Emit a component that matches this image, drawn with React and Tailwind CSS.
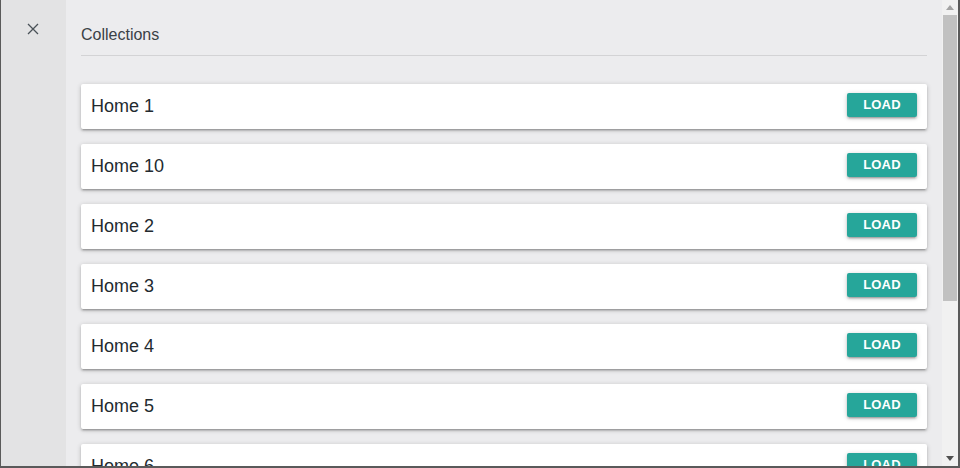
import React from "react";

const items = ["Home 1", "Home 10", "Home 2", "Home 3", "Home 4", "Home 5", "Home 6", "Home 7", "Home 8", "Home 9"];

export default function App() {
  return (
    <div className="flex h-[468px] w-[960px] overflow-hidden border-l border-r-2 border-b-2 border-[#5a5a5a] font-['Liberation_Sans',Arial,sans-serif]">
      <div className="w-[65px] shrink-0 bg-[#e3e3e4]">
        <div className="flex h-[58px] items-center justify-center">
          <svg width="12" height="12" viewBox="0 0 12 12" className="mt-[-1px] ml-[-1px]">
            <path d="M1 1 L11 11 M11 1 L1 11" stroke="#4a5258" strokeWidth="1.3" fill="none" />
          </svg>
        </div>
      </div>
      <div className="flex-1 overflow-hidden bg-[#ececee] px-[15px]">
        <div className="border-b border-[#d3d3d5] pt-[25px] pb-[10px] text-[16px] leading-[20px] text-[#3a4146]">Collections</div>
        <div className="mt-[28px] flex flex-col gap-[15px] pb-[24px]">
          {items.map((it) => (
            <div
              key={it}
              className="flex h-[45px] items-start justify-between rounded-[2px] bg-white pl-[10px] pr-[10px] shadow-[0_2px_2px_0_rgba(0,0,0,0.14),0_3px_1px_-2px_rgba(0,0,0,0.12),0_1px_5px_0_rgba(0,0,0,0.2)]"
            >
              <span className="mt-[11px] text-[18px] leading-[22px] text-[#232a2f]">{it}</span>
              <button className="mt-[9px] flex h-[24px] w-[70px] items-center justify-center rounded-[2px] bg-[#26a69a] text-[13px] font-bold tracking-[0.2px] text-white shadow-[0_2px_2px_0_rgba(0,0,0,0.14),0_3px_1px_-2px_rgba(0,0,0,0.12),0_1px_5px_0_rgba(0,0,0,0.2)]">
                LOAD
              </button>
            </div>
          ))}
        </div>
      </div>
      <div className="flex w-[16px] shrink-0 flex-col bg-[#f1f1f1]">
        <div className="flex h-[15px] items-center justify-center">
          <svg width="8" height="5" viewBox="0 0 8 5">
            <path d="M0 5 L4 0 L8 5 Z" fill="#a3a3a3" />
          </svg>
        </div>
        <div className="mx-[1px] h-[286px] bg-[#c1c1c1]" />
        <div className="flex-1" />
        <div className="flex h-[15px] items-center justify-center">
          <svg width="8" height="5" viewBox="0 0 8 5">
            <path d="M0 0 L8 0 L4 5 Z" fill="#505050" />
          </svg>
        </div>
      </div>
    </div>
  );
}
